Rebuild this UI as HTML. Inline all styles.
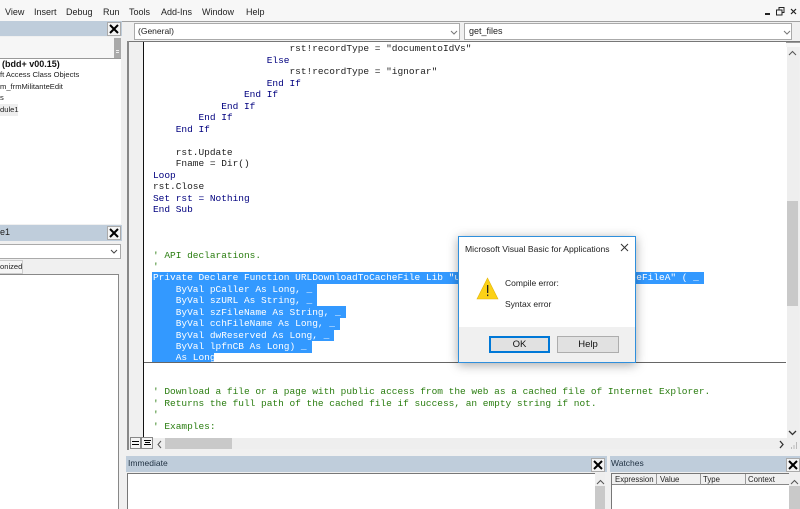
<!DOCTYPE html>
<html><head><meta charset="utf-8"><style>
html,body{margin:0;padding:0;background:#f0f0f0}
#r{position:relative;width:800px;height:509px;overflow:hidden;background:#f0f0f0;font:9px "Liberation Sans",sans-serif;color:#111;filter:blur(.3px)}
#r div{position:absolute;box-sizing:border-box}
.m{top:7px;font-size:9px;color:#222;white-space:pre}
.l{left:0;font:9.5px/11px "Liberation Mono",monospace;letter-spacing:-.015px;white-space:pre;color:#00007f;height:11px}
.t{color:#222}.c{color:#2a7d10}.w{color:#fff}
.s{background:#3399ff;left:152px;height:12px}
.tb{background:#bfcddb;height:16px}
.x{width:14px;height:14px;background:#f4f4f4;border:1px solid #aaa}
.x svg{position:absolute;left:1px;top:1px}
.sc{background:#eeeeee}
.th{background:#c9c9c9}
.tr{left:0;font:7.6px/12px "Liberation Sans",sans-serif;color:#222;white-space:pre}
.h{top:474px;font:7.8px/12px "Liberation Sans",sans-serif;color:#222}
</style></head><body><div id="r">
<div style="left:0;top:0;width:800px;height:21px;background:#f7f7f7"></div>
<div style="left:0;top:21px;width:800px;height:1px;background:#a0a0a0"></div>
<div class="m" style="left:5px">View</div><div class="m" style="left:34px">Insert</div><div class="m" style="left:66px">Debug</div><div class="m" style="left:103px">Run</div><div class="m" style="left:129px">Tools</div><div class="m" style="left:161px">Add-Ins</div><div class="m" style="left:202px">Window</div><div class="m" style="left:246px">Help</div>
<div style="left:765px;top:13px;width:5px;height:2px;background:#222"></div>
<svg style="position:absolute;left:776px;top:7px" width="10" height="9"><path d="M3 2.500V.500h5v5H6.500M.500 3h5.500v5H.500Z" fill="none" stroke="#222"/></svg>
<svg style="position:absolute;left:790px;top:8px" width="8" height="7"><path d="M1 1l5 5M6 1L1 6" fill="none" stroke="#222" stroke-width="1.200"/></svg>

<!-- left panels -->
<div style="left:0;top:22px;width:122px;height:487px;background:#f0f0f0"></div>
<div class="tb" style="left:0;top:21px;width:122px;height:15px"></div>
<div class="x" style="left:107px;top:22px"><svg width="10" height="10"><path d="M1 1l8 8M9 1L1 9" stroke="#000" stroke-width="2"/></svg></div>
<div style="left:0;top:37px;width:114px;height:21px;background:#f6f6f6"></div>
<div style="left:114px;top:38px;width:7px;height:20px;background:#a9a9a9"></div>
<div style="left:116px;top:50px;width:3px;height:1px;background:#eee"></div>
<div style="left:116px;top:52px;width:3px;height:1px;background:#eee"></div>
<div style="left:0;top:58px;width:121px;height:166px;background:#fff;border-top:1px solid #999"></div>
<div style="left:2px;top:58px;font:bold 9px/13px 'Liberation Sans';color:#111;white-space:pre">(bdd+ v00.15)</div>
<div class="tr" style="top:69px">ft Access Class Objects</div>
<div class="tr" style="top:81px">m_frmMilitanteEdit</div>
<div class="tr" style="top:92px">s</div>
<div style="left:0;top:104px;width:18px;height:12px;background:#eee"></div>
<div class="tr" style="top:104px">dule1</div>

<div class="tb" style="left:0;top:225px;width:122px"></div>
<div style="left:0;top:225px;font:9px/15px 'Liberation Sans';color:#222">e1</div>
<div class="x" style="left:107px;top:226px"><svg width="10" height="10"><path d="M1 1l8 8M9 1L1 9" stroke="#000" stroke-width="2"/></svg></div>
<div style="left:0;top:244px;width:121px;height:15px;background:#fff;border:1px solid #aaa;border-left:0"></div>
<svg style="position:absolute;left:110px;top:249px" width="8" height="5"><path d="M1 1l3 3 3-3" fill="none" stroke="#444"/></svg>
<div style="left:0;top:260px;width:23px;height:14px;background:#f5f5f5;border:1px solid #ccc;border-left:0;font:7.6px/12px 'Liberation Sans';color:#222">onized</div>
<div style="left:0;top:274px;width:119px;height:235px;background:#fff;border:1px solid #888;border-left:0;border-bottom:0"></div>

<!-- combos -->
<div style="left:134px;top:23px;width:326px;height:17px;background:#fff;border:1px solid #aaa;font:8.5px/14px 'Liberation Sans';padding-left:3px;color:#222">(General)</div>
<svg style="position:absolute;left:450px;top:30px" width="8" height="5"><path d="M1 1l3 3 3-3" fill="none" stroke="#777"/></svg>
<div style="left:464px;top:23px;width:328px;height:17px;background:#fff;border:1px solid #aaa;font:9px/14px 'Liberation Sans';padding-left:4px;color:#222">get_files</div>
<svg style="position:absolute;left:783px;top:30px" width="8" height="5"><path d="M1 1l3 3 3-3" fill="none" stroke="#777"/></svg>

<!-- code pane -->
<div style="left:127px;top:41px;width:673px;height:1px;background:#777"></div>
<div style="left:127px;top:41px;width:2px;height:409px;background:#888"></div>
<div style="left:129px;top:42px;width:14px;height:396px;background:#f0f0f0"></div>
<div style="left:143px;top:42px;width:1px;height:396px;background:#111"></div>
<div style="left:144px;top:42px;width:643px;height:396px;background:#fff"></div>

<div class="sc" style="left:787px;top:42px;width:12px;height:396px"></div>
<div style="left:786px;top:42px;width:14px;height:5px;background:#f7f7f7;border-top:1px solid #999"></div>
<svg style="position:absolute;left:788px;top:50px" width="9" height="6"><path d="M1 5l3.500-3.500 3.500 3.500" fill="none" stroke="#555"/></svg>
<div class="th" style="left:787px;top:201px;width:11px;height:105px"></div>
<svg style="position:absolute;left:788px;top:430px" width="9" height="6"><path d="M1 1l3.500 3.500 3.500-3.500" fill="none" stroke="#333" stroke-width="1.300"/></svg>

<div class="s" style="top:272px;width:552px"></div>
<div class="s" style="top:284px;width:165px"></div>
<div class="s" style="top:295px;width:165px"></div>
<div class="s" style="top:306px;width:194px"></div>
<div class="s" style="top:318px;width:188px"></div>
<div class="s" style="top:329px;width:182px"></div>
<div class="s" style="top:341px;width:160px"></div>
<div class="s" style="top:352px;width:62px;height:10px"></div>

<div style="left:153px;top:0;width:640px;height:440px">
<div class="l t" style="top:43px">                        rst!recordType = "documentoIdVs"</div>
<div class="l" style="top:55px">                    Else</div>
<div class="l t" style="top:66px">                        rst!recordType = "ignorar"</div>
<div class="l" style="top:78px">                    End If</div>
<div class="l" style="top:89px">                End If</div>
<div class="l" style="top:101px">            End If</div>
<div class="l" style="top:112px">        End If</div>
<div class="l" style="top:124px">    End If</div>
<div class="l t" style="top:147px">    rst.Update</div>
<div class="l t" style="top:158px">    Fname = Dir()</div>
<div class="l" style="top:170px">Loop</div>
<div class="l t" style="top:181px">rst.Close</div>
<div class="l" style="top:193px">Set rst = Nothing</div>
<div class="l" style="top:204px">End Sub</div>
<div class="l c" style="top:250px">' API declarations.</div>
<div class="l c" style="top:261px">'</div>
<div class="l w" style="top:272px">Private Declare Function URLDownloadToCacheFile Lib "urlmon" Alias "URLDownloadToCacheFileA" ( _</div>
<div class="l w" style="top:284px">    ByVal pCaller As Long, _</div>
<div class="l w" style="top:295px">    ByVal szURL As String, _</div>
<div class="l w" style="top:307px">    ByVal szFileName As String, _</div>
<div class="l w" style="top:318px">    ByVal cchFileName As Long, _</div>
<div class="l w" style="top:330px">    ByVal dwReserved As Long, _</div>
<div class="l w" style="top:341px">    ByVal lpfnCB As Long) _</div>
<div class="l w" style="top:352px">    As Long</div>
<div class="l c" style="top:386px">' Download a file or a page with public access from the web as a cached file of Internet Explorer.</div>
<div class="l c" style="top:398px">' Returns the full path of the cached file if success, an empty string if not.</div>
<div class="l c" style="top:409px">'</div>
<div class="l c" style="top:421px">' Examples:</div>
</div>
<div style="left:144px;top:362px;width:642px;height:1px;background:#666"></div>

<!-- hscroll -->
<div class="sc" style="left:129px;top:438px;width:671px;height:11px"></div>
<div style="left:130px;top:437px;width:11px;height:12px;background:#f4f4f4;border:1px solid #888"></div>
<div style="left:132px;top:441px;width:7px;height:1px;background:#000"></div><div style="left:132px;top:444px;width:7px;height:1px;background:#000"></div>
<div style="left:141px;top:437px;width:12px;height:12px;background:#f4f4f4;border:1px solid #888"></div>
<div style="left:144px;top:440px;width:7px;height:1px;background:#000"></div><div style="left:145px;top:442px;width:5px;height:1px;background:#000"></div><div style="left:144px;top:444px;width:7px;height:1px;background:#000"></div>
<svg style="position:absolute;left:157px;top:440px" width="6" height="9"><path d="M4 1L1 4.500l3 3.500" fill="none" stroke="#555"/></svg>
<div class="th" style="left:165px;top:438px;width:67px;height:11px"></div>
<svg style="position:absolute;left:779px;top:440px" width="6" height="9"><path d="M1 1l3 3.500-3 3.500" fill="none" stroke="#333" stroke-width="1.300"/></svg>
<svg style="position:absolute;left:790px;top:441px" width="8" height="8"><path d="M1.500 8V6M4 8V4M6.500 8V1" stroke="#bbb" fill="none"/></svg>

<!-- bottom -->
<div style="left:126px;top:456px;width:481px;height:53px;background:#f0f0f0"></div>
<div class="tb" style="left:126px;top:456px;width:481px"></div>
<div style="left:128px;top:456px;font:8.500px/14px 'Liberation Sans';color:#234">Immediate</div>
<div class="x" style="left:591px;top:458px"><svg width="10" height="10"><path d="M1 1l8 8M9 1L1 9" stroke="#000" stroke-width="2"/></svg></div>
<div style="left:127px;top:473px;width:468px;height:36px;background:#fff;border-top:1px solid #777;border-left:1px solid #777"></div>
<div class="sc" style="left:595px;top:473px;width:10px;height:36px"></div>
<svg style="position:absolute;left:596px;top:479px" width="9" height="6"><path d="M1 5l3.500-3.500 3.500 3.500" fill="none" stroke="#555"/></svg>
<div class="th" style="left:595px;top:486px;width:10px;height:23px"></div>

<div class="tb" style="left:610px;top:456px;width:190px"></div>
<div style="left:611px;top:456px;font:8.500px/14px 'Liberation Sans';color:#234">Watches</div>
<div class="x" style="left:786px;top:458px"><svg width="10" height="10"><path d="M1 1l8 8M9 1L1 9" stroke="#000" stroke-width="2"/></svg></div>
<div style="left:611px;top:473px;width:178px;height:36px;background:#fff;border-top:1px solid #777;border-left:1px solid #777"></div>
<div style="left:612px;top:474px;width:177px;height:11px;background:#f0f0f0;border-bottom:1px solid #888"></div>
<div class="h" style="left:615px">Expression</div>
<div class="h" style="left:660px">Value</div>
<div class="h" style="left:703px">Type</div>
<div class="h" style="left:748px">Context</div>
<div style="left:656px;top:474px;width:1px;height:11px;background:#999"></div>
<div style="left:700px;top:474px;width:1px;height:11px;background:#999"></div>
<div style="left:745px;top:474px;width:1px;height:11px;background:#999"></div>
<div class="sc" style="left:789px;top:473px;width:11px;height:36px"></div>
<svg style="position:absolute;left:790px;top:479px" width="9" height="6"><path d="M1 5l3.500-3.500 3.500 3.500" fill="none" stroke="#555"/></svg>
<div class="th" style="left:789px;top:486px;width:11px;height:23px"></div>

<!-- dialog -->
<div style="left:458px;top:236px;width:178px;height:127px;background:#fff;border:1px solid #2f8fdc;box-shadow:0 2px 10px rgba(0,0,0,.35)">
<div style="left:6px;top:5px;font:8.600px/14px 'Liberation Sans';color:#222;white-space:pre">Microsoft Visual Basic for Applications</div>
<svg style="position:absolute;left:161px;top:6px" width="9" height="9"><path d="M1 1l7 7M8 1l-7 7" stroke="#333" fill="none"/></svg>
<svg style="position:absolute;left:17px;top:39px" width="25" height="24"><path d="M11.500 2L22 23H1Z" fill="#fcd116" stroke="#e2b60c" stroke-width=".6"/><rect x="11" y="9" width="1.300" height="8" fill="#222"/><rect x="11" y="18.500" width="1.300" height="1.600" fill="#222"/></svg>
<div style="left:46px;top:39px;font:8.500px/14px 'Liberation Sans';color:#222;white-space:pre">Compile error:</div>
<div style="left:46px;top:60px;font:8.500px/14px 'Liberation Sans';color:#222;white-space:pre">Syntax error</div>
<div style="left:0;top:90px;width:176px;height:35px;background:#f0f0f0"></div>
<div style="left:30px;top:99px;width:61px;height:17px;background:#e1e1e1;border:2px solid #0078d7;font:9.500px/13px 'Liberation Sans';text-align:center;color:#111">OK</div>
<div style="left:98px;top:99px;width:62px;height:17px;background:#e1e1e1;border:1px solid #adadad;font:9.500px/15px 'Liberation Sans';text-align:center;color:#111">Help</div>
</div>
</div></body></html>
